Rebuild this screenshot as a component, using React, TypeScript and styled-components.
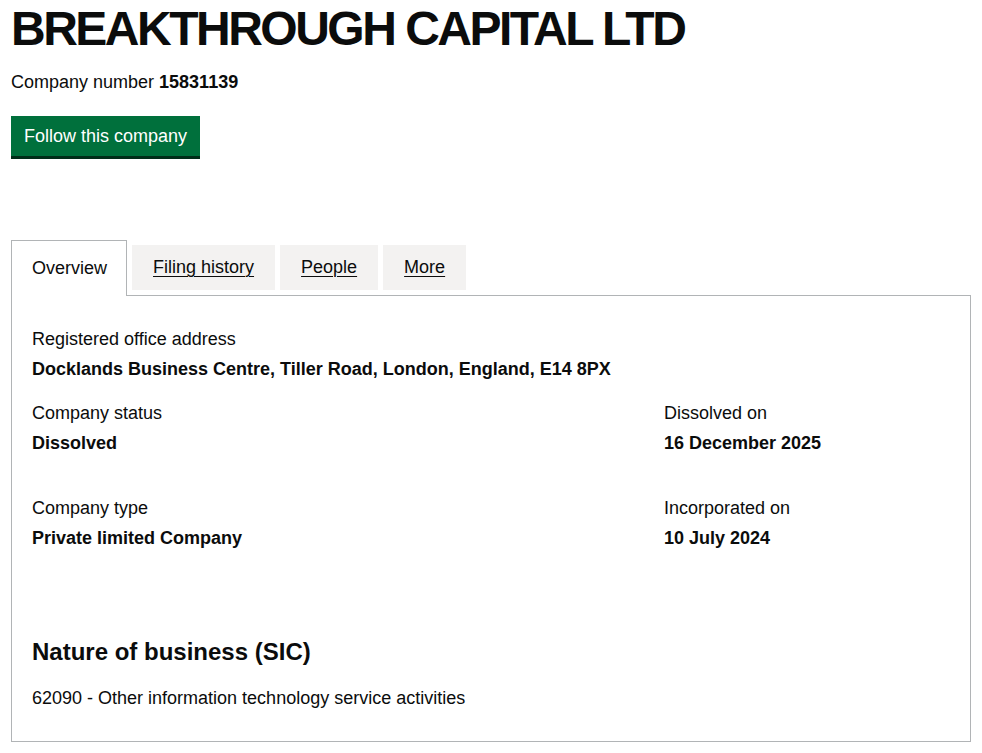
import { FC, ReactElement } from 'react';
import styled, { createGlobalStyle } from 'styled-components';

const GlobalStyle = createGlobalStyle`
  body {
    margin: 0;
    background: #ffffff;
    color: #0b0c0c;
    font-family: "Liberation Sans", Arial, sans-serif;
  }
`;

const Page = styled.div`
  padding: 0 11px 11px 11px;
  width: 960px;
`;

const Title = styled.h1`
  font-size: 48px;
  line-height: 58px;
  font-weight: 700;
  margin: 0;
  letter-spacing: -2.5px;
`;

const CompanyNumber = styled.p`
  font-size: 18px;
  line-height: 25px;
  margin: 12px 0 0 0;
`;

const Strong = styled.strong`
  font-weight: 700;
`;

const FollowButton = styled.button`
  display: inline-block;
  margin-top: 21px;
  background: #00703c;
  color: #ffffff;
  border: 0;
  box-shadow: 0 3px 0 #002d18;
  font-family: inherit;
  font-size: 18px;
  line-height: 20px;
  padding: 10px 11px;
  width: 189px;
  height: 40px;
  cursor: pointer;
`;

const Tabs = styled.div`
  margin-top: 84px;
`;

const TabList = styled.ul`
  display: flex;
  align-items: flex-end;
  list-style: none;
  margin: 0;
  padding: 0;
`;

const Tab = styled.li<{ $selected?: boolean }>`
  margin-right: 5px;
  font-size: 18px;
  line-height: 25px;
  background: ${({ $selected }) => ($selected ? '#ffffff' : '#f3f2f1')};
  border: ${({ $selected }) => ($selected ? '1px solid #b1b4b6' : '0')};
  border-bottom: 0;
  margin-bottom: ${({ $selected }) => ($selected ? '-1px' : '5px')};
  padding: ${({ $selected }) => ($selected ? '15px 19px 15px 20px' : '10px 21px')};
  position: relative;
  z-index: ${({ $selected }) => ($selected ? 1 : 0)};
`;

const TabLink = styled.a<{ $selected?: boolean }>`
  color: #0b0c0c;
  text-decoration: ${({ $selected }) => ($selected ? 'none' : 'underline')};
  text-underline-offset: 3px;
  text-decoration-thickness: 1px;
`;

const Panel = styled.div`
  border: 1px solid #b1b4b6;
  padding: 31px 20px 24px 20px;
  height: 390px;
`;

const Row = styled.div`
  display: grid;
  grid-template-columns: 632px 1fr;
`;

const Field = styled.dl<{ $gap?: number }>`
  margin: 0 0 ${({ $gap }) => $gap ?? 0}px 0;
`;

const Label = styled.dt`
  font-size: 18px;
  line-height: 25px;
  margin: 0;
`;

const Value = styled.dd`
  font-size: 18px;
  line-height: 25px;
  font-weight: 700;
  margin: 5px 0 0 0;
`;

const Section = styled.section`
  margin-top: 86px;
`;

const Heading = styled.h2`
  font-size: 24px;
  line-height: 30px;
  font-weight: 700;
  margin: 0;
`;

const Sic = styled.p`
  font-size: 18px;
  line-height: 25px;
  margin: 19px 0 0 0;
`;

const tabs = ['Overview', 'Filing history', 'People', 'More'];

const App: FC = (): ReactElement => {
  return (
    <Page>
      <GlobalStyle />
      <Title>BREAKTHROUGH CAPITAL LTD</Title>
      <CompanyNumber>
        Company number <Strong>15831139</Strong>
      </CompanyNumber>
      <FollowButton>Follow this company</FollowButton>
      <Tabs>
        <TabList>
          {tabs.map((t, i) => (
            <Tab key={t} $selected={i === 0}>
              <TabLink href="#" $selected={i === 0}>{t}</TabLink>
            </Tab>
          ))}
        </TabList>
        <Panel>
          <Field $gap={19}>
            <Label>Registered office address</Label>
            <Value>Docklands Business Centre, Tiller Road, London, England, E14 8PX</Value>
          </Field>
          <Row>
            <Field $gap={40}>
              <Label>Company status</Label>
              <Value>Dissolved</Value>
            </Field>
            <Field $gap={40}>
              <Label>Dissolved on</Label>
              <Value>16 December 2025</Value>
            </Field>
          </Row>
          <Row>
            <Field>
              <Label>Company type</Label>
              <Value>Private limited Company</Value>
            </Field>
            <Field>
              <Label>Incorporated on</Label>
              <Value>10 July 2024</Value>
            </Field>
          </Row>
          <Section>
            <Heading>Nature of business (SIC)</Heading>
            <Sic>62090 - Other information technology service activities</Sic>
          </Section>
        </Panel>
      </Tabs>
    </Page>
  );
};

export default App;
